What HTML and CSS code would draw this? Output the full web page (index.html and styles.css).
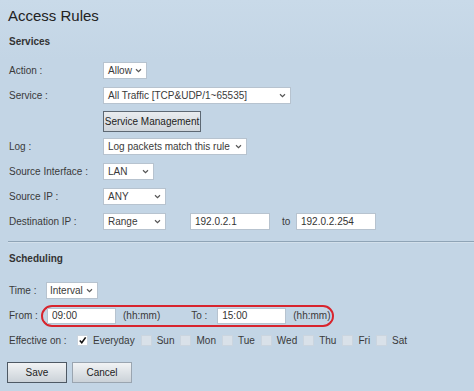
FILE: index.html
```html
<!DOCTYPE html>
<html lang="en">
<head>
    <meta charset="UTF-8">
    <title>Access Rules</title>
    <link rel="stylesheet" href="styles.css">
</head>
<body>
    <div class="page">
        <h1>Access Rules</h1>
        <h2>Services</h2>

        <div class="row">
            <span class="label">Action :</span>
            <div class="select w-allow">Allow <svg viewBox="0 0 8 6"><path d="M1 1.5 L4 4.5 L7 1.5"/></svg></div>
        </div>
        <div class="row">
            <span class="label">Service :</span>
            <div class="select w-service">All Traffic [TCP&amp;UDP/1~65535] <svg viewBox="0 0 8 6"><path d="M1 1.5 L4 4.5 L7 1.5"/></svg></div>
        </div>
        <div class="row row-btn">
            <span class="label"></span>
            <button type="button" class="btn-mgmt">Service Management</button>
        </div>
        <div class="row">
            <span class="label">Log :</span>
            <div class="select w-log">Log packets match this rule <svg viewBox="0 0 8 6"><path d="M1 1.5 L4 4.5 L7 1.5"/></svg></div>
        </div>
        <div class="row">
            <span class="label">Source Interface :</span>
            <div class="select w-lan">LAN <svg viewBox="0 0 8 6"><path d="M1 1.5 L4 4.5 L7 1.5"/></svg></div>
        </div>
        <div class="row">
            <span class="label">Source IP :</span>
            <div class="select w-any">ANY <svg viewBox="0 0 8 6"><path d="M1 1.5 L4 4.5 L7 1.5"/></svg></div>
        </div>
        <div class="row">
            <span class="label">Destination IP :</span>
            <div class="select w-any">Range <svg viewBox="0 0 8 6"><path d="M1 1.5 L4 4.5 L7 1.5"/></svg></div>
            <input type="text" class="ip ip-from" value="192.0.2.1">
            <span class="to">to</span>
            <input type="text" class="ip" value="192.0.2.254">
        </div>

        <div class="divider"></div>

        <h2 class="sched">Scheduling</h2>

        <div class="row row-time">
            <span class="label-short">Time :</span>
            <div class="select w-interval">Interval <svg viewBox="0 0 8 6"><path d="M1 1.5 L4 4.5 L7 1.5"/></svg></div>
        </div>
        <div class="row">
            <span class="label-from">From :</span>
            <div class="highlight">
                <input type="text" class="time" value="09:00">
                <span class="unit">(hh:mm)</span>
                <span class="to-label">To :</span>
                <input type="text" class="time" value="15:00">
                <span class="unit">(hh:mm)</span>
            </div>
        </div>
        <div class="row">
            <span class="label-eff">Effective on :</span>
            <div class="days">
                <span class="check checked"><svg viewBox="0 0 10 10"><path d="M2 5 L4.2 7.5 L8.5 1.5"/></svg></span><span class="day">Everyday</span>
                <span class="check"></span><span class="day">Sun</span>
                <span class="check"></span><span class="day">Mon</span>
                <span class="check"></span><span class="day">Tue</span>
                <span class="check"></span><span class="day">Wed</span>
                <span class="check"></span><span class="day">Thu</span>
                <span class="check"></span><span class="day">Fri</span>
                <span class="check"></span><span class="day">Sat</span>
            </div>
        </div>

        <div class="actions">
            <button type="button" class="btn btn-save">Save</button>
            <button type="button" class="btn">Cancel</button>
        </div>
    </div>
</body>
</html>
```

FILE: styles.css
```css
html, body {
    margin: 0;
    height: 100%;
}
body {
    font-family: "Liberation Sans", Arial, sans-serif;
    font-size: 10px;
    color: #3a3a3a;
    background: linear-gradient(#c9dae9, #c3d5e5 60px, #c3d5e5);
}
.page {
    padding-left: 9px;
}
h1 {
    margin: 0 0 0 -1px;
    height: 32px;
    line-height: 32px;
    font-size: 15px;
    font-weight: normal;
    color: #222;
}
h2 {
    margin: 0 0 6px;
    height: 20px;
    line-height: 20px;
    font-size: 10px;
    font-weight: bold;
    color: #333;
}
.row {
    display: flex;
    align-items: center;
    height: 25px;
}
.row-btn {
    height: 26px;
}
.label {
    width: 94px;
}
.select {
    display: flex;
    align-items: center;
    justify-content: space-between;
    box-sizing: border-box;
    height: 17px;
    padding: 0 4px 0 4px;
    background: #fff;
    border: 1px solid #b7c3cf;
    white-space: nowrap;
}
.select svg {
    flex: none;
    width: 7px;
    height: 5px;
    fill: none;
    stroke: #555;
    stroke-width: 1.4;
}
.w-allow { width: 44px; }
.w-service { width: 188px; }
.w-log { width: 144px; }
.w-lan { width: 51px; }
.w-any { width: 63px; }
.w-interval { width: 52px; padding-left: 3px; }
.btn-mgmt {
    box-sizing: border-box;
    width: 98px;
    height: 21px;
    padding: 0;
    font-family: inherit;
    font-size: 10px;
    white-space: nowrap;
    color: #222;
    background: linear-gradient(#e9ecef, #cfd5db);
    border: 1px solid #5d6873;
}
input {
    box-sizing: border-box;
    height: 17px;
    padding: 0 4px;
    font-family: inherit;
    font-size: 10px;
    color: #333;
    background: #fff;
    border: 1px solid #b7c3cf;
}
.ip {
    width: 80px;
}
.ip-from {
    margin-left: 24px;
}
.to {
    width: 26px;
    padding-left: 12px;
    box-sizing: border-box;
}
.divider {
    margin: 7px 0 0 -1px;
    height: 1px;
    background: #8fa4b6;
    border-bottom: 1px solid #d3e0eb;
}
.sched {
    margin-top: 6px;
}
.row-time {
    margin-top: 9px;
}
.label-short {
    width: 37px;
}
.label-from {
    width: 32px;
}
.highlight {
    display: flex;
    align-items: center;
    box-sizing: border-box;
    width: 293px;
    height: 22px;
    padding-left: 4px;
    border: 2px solid #d8242d;
    border-radius: 11px;
}
.time {
    width: 69px;
    height: 16px;
}
.unit {
    margin-left: 7px;
}
.to-label {
    margin-left: 31px;
    width: 26px;
}
.label-eff {
    width: 68px;
}
.days {
    display: flex;
    align-items: center;
}
.check {
    box-sizing: border-box;
    width: 11px;
    height: 11px;
    margin-right: 5px;
    background: #d9e1e9;
    border: 1px solid #cbd5df;
}
.check.checked {
    background: #fff;
}
.check svg {
    display: block;
    width: 9px;
    height: 9px;
    fill: none;
    stroke: #111;
    stroke-width: 1.8;
}
.day {
    margin-right: 6px;
}
.actions {
    display: flex;
    gap: 5px;
    margin-top: 9px;
    margin-left: -2px;
}
.btn {
    box-sizing: border-box;
    width: 60px;
    height: 21px;
    padding: 0;
    font-family: inherit;
    font-size: 10px;
    color: #222;
    background: linear-gradient(#f1f3f5, #cbd2d8);
    border: 1px solid #9aa5b0;
}
.btn-save {
    border-color: #4e5964;
}
```
